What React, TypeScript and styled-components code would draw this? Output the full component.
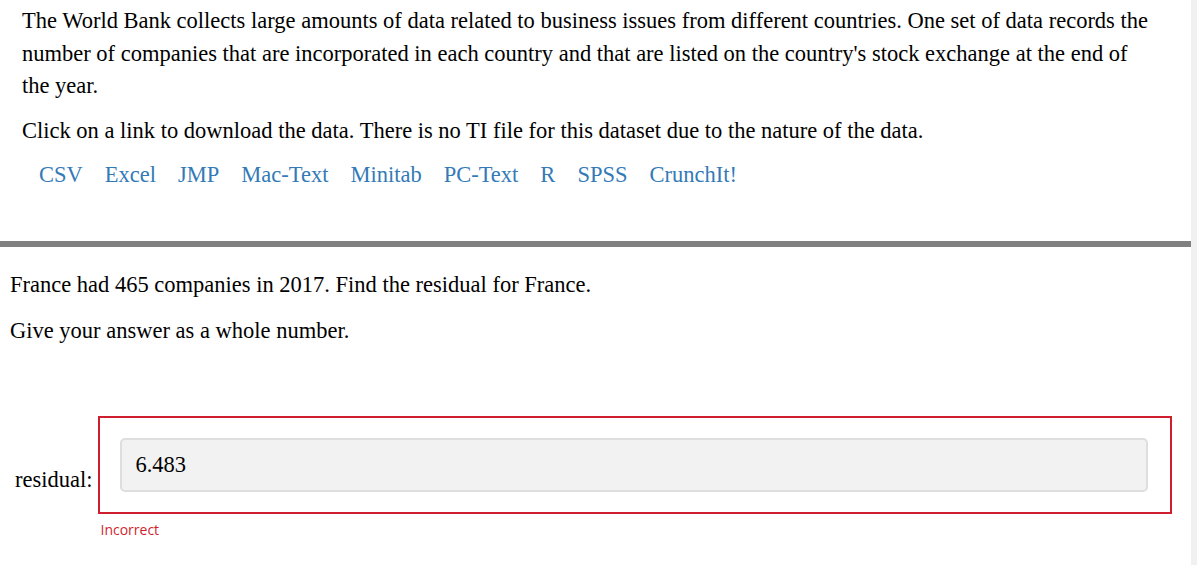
import styled, { createGlobalStyle } from 'styled-components';

const GlobalStyle = createGlobalStyle`
	html, body {
		margin: 0;
		padding: 0;
		background: #fff;
	}
	body {
		font-family: 'Liberation Serif', 'Times New Roman', serif;
		color: #000;
	}
`;

const Shell = styled.div`
	display: flex;
	min-height: 100vh;
`;

const Page = styled.main`
	flex: 1;
	min-width: 0;
`;

const ScrollTrack = styled.div`
	width: 6px;
	flex-shrink: 0;
	background: #f1f1f1;
`;

const Intro = styled.section`
	padding: 5px 40px 0 22px;
`;

const Text = styled.p<{ $space?: number }>`
	margin: 0 0 ${(p) => p.$space ?? 12}px 0;
	font-size: 22.5px;
	line-height: 32.5px;
`;

const LinkRow = styled.nav`
	display: flex;
	gap: 22px;
	padding-left: 17px;
	font-size: 22.5px;
	line-height: 32.5px;
	margin: 3px 0 49px 0;
`;

const DataLink = styled.a`
	color: #337ab7;
	text-decoration: none;
`;

const Divider = styled.hr`
	margin: 0;
	border: none;
	height: 6px;
	background: #808080;
`;

const Question = styled.section`
	padding: 22px 19px 0 10px;
`;

const AnswerRow = styled.div`
	display: flex;
	align-items: flex-start;
	margin: 68px 0 0 5px;
`;

const Label = styled.label`
	font-size: 22.5px;
	line-height: 32.5px;
	padding-top: 48px;
	margin-right: 6px;
	white-space: nowrap;
`;

const AnswerColumn = styled.div`
	flex: 1;
	display: flex;
	flex-direction: column;
`;

const ResultBox = styled.div<{ $wrong: boolean }>`
	border: 2px solid ${(p) => (p.$wrong ? '#cf1f2e' : '#3c763d')};
	padding: 20px 22px 20px 20px;
`;

const AnswerInput = styled.input`
	display: block;
	box-sizing: border-box;
	width: 100%;
	height: 54px;
	padding: 0 13px;
	border: 2px solid #dedede;
	border-radius: 5px;
	background: #f2f2f2;
	font-family: 'Liberation Serif', 'Times New Roman', serif;
	font-size: 22.5px;
	color: #000;
	outline: none;
`;

const Feedback = styled.div`
	margin: 6px 0 0 2px;
	font-family: 'Open Sans', 'Liberation Sans', sans-serif;
	font-size: 14px;
	line-height: 19px;
	color: #cf1f2e;
`;

const formats = ['CSV', 'Excel', 'JMP', 'Mac-Text', 'Minitab', 'PC-Text', 'R', 'SPSS', 'CrunchIt!'];

const App = () => {
	return (
		<>
			<GlobalStyle />
			<Shell>
				<Page>
					<Intro>
						<Text>
							The World Bank collects large amounts of data related to business issues from different
							countries. One set of data records the number of companies that are incorporated in each
							country and that are listed on the country's stock exchange at the end of the year.
						</Text>
						<Text>
							Click on a link to download the data. There is no TI file for this dataset due to the nature
							of the data.
						</Text>
						<LinkRow>
							{formats.map((f) => (
								<DataLink key={f} href="#">
									{f}
								</DataLink>
							))}
						</LinkRow>
					</Intro>
					<Divider />
					<Question>
						<Text $space={14}>France had 465 companies in 2017. Find the residual for France.</Text>
						<Text $space={14}>Give your answer as a whole number.</Text>
						<AnswerRow>
							<Label htmlFor="residual">residual:</Label>
							<AnswerColumn>
								<ResultBox $wrong>
									<AnswerInput id="residual" defaultValue="6.483" />
								</ResultBox>
								<Feedback>Incorrect</Feedback>
							</AnswerColumn>
						</AnswerRow>
					</Question>
				</Page>
				<ScrollTrack />
			</Shell>
		</>
	);
};

export default App;
